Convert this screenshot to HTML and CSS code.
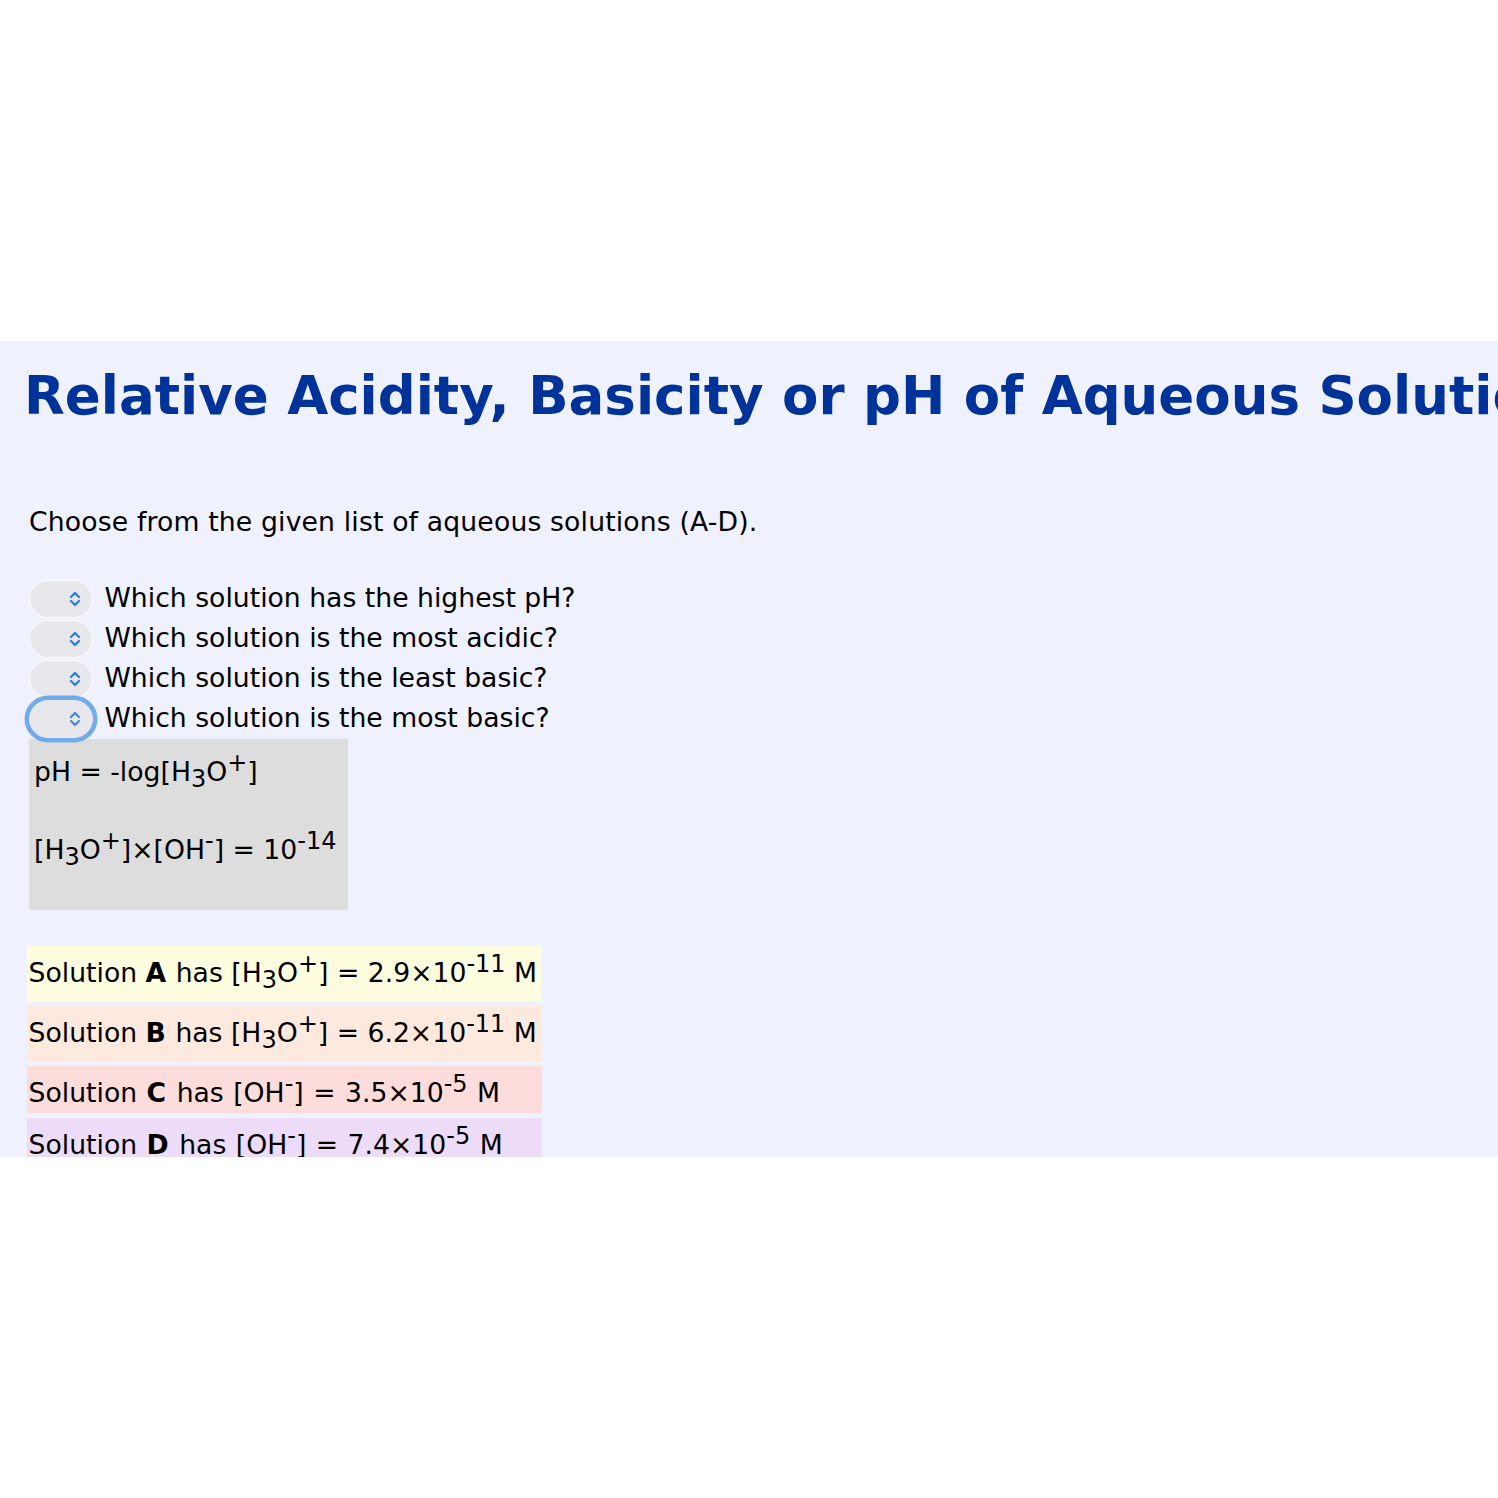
FILE: index.html
```html
<!DOCTYPE html>
<html lang="en">
<head>
<meta charset="utf-8">
<title>Relative Acidity, Basicity or pH of Aqueous Solutions</title>
<link rel="stylesheet" href="styles.css">
</head>
<body>
<div class="top-space"></div>
<main class="frame">
  <h1 class="title">Relative Acidity, Basicity or pH of Aqueous Solutions</h1>
  <p class="intro">Choose from the given list of aqueous solutions (A-D).</p>
  <div class="questions">
    <div class="q">
      <span class="sel"><svg class="chev" viewBox="0 0 12 18" width="12" height="18"><path d="M2 7 L6 3 L10 7 M2 11 L6 15 L10 11" fill="none" stroke="#2b7be3" stroke-width="2.2" stroke-linecap="round" stroke-linejoin="round"/></svg></span>
      <span class="qtext">Which solution has the highest pH?</span>
    </div>
    <div class="q">
      <span class="sel"><svg class="chev" viewBox="0 0 12 18" width="12" height="18"><path d="M2 7 L6 3 L10 7 M2 11 L6 15 L10 11" fill="none" stroke="#2b7be3" stroke-width="2.2" stroke-linecap="round" stroke-linejoin="round"/></svg></span>
      <span class="qtext">Which solution is the most acidic?</span>
    </div>
    <div class="q">
      <span class="sel"><svg class="chev" viewBox="0 0 12 18" width="12" height="18"><path d="M2 7 L6 3 L10 7 M2 11 L6 15 L10 11" fill="none" stroke="#2b7be3" stroke-width="2.2" stroke-linecap="round" stroke-linejoin="round"/></svg></span>
      <span class="qtext">Which solution is the least basic?</span>
    </div>
    <div class="q">
      <span class="sel focused"><svg class="chev" viewBox="0 0 12 18" width="12" height="18"><path d="M2 7 L6 3 L10 7 M2 11 L6 15 L10 11" fill="none" stroke="#4a86d6" stroke-width="2.2" stroke-linecap="round" stroke-linejoin="round"/></svg></span>
      <span class="qtext">Which solution is the most basic?</span>
    </div>
  </div>
  <div class="formula">
    <div class="fline">pH = -log[H<sub>3</sub>O<sup>+</sup>]</div>
    <div class="fline second">[H<sub>3</sub>O<sup>+</sup>]×[OH<sup>-</sup>] = 10<sup>-14</sup></div>
  </div>
  <div class="solutions">
    <div class="sol sol-a">Solution <b>A</b> has [H<sub>3</sub>O<sup>+</sup>] = 2.9×10<sup>-11</sup> M</div>
    <div class="sol sol-b">Solution <b>B</b> has [H<sub>3</sub>O<sup>+</sup>] = 6.2×10<sup>-11</sup> M</div>
    <div class="sol sol-c short">Solution <b>C</b> has [OH<sup>-</sup>] = 3.5×10<sup>-5</sup> M</div>
    <div class="sol sol-d short">Solution <b>D</b> has [OH<sup>-</sup>] = 7.4×10<sup>-5</sup> M</div>
  </div>
</main>
</body>
</html>
```

FILE: styles.css
```css
html, body {
  margin: 0;
  padding: 0;
  background: #ffffff;
}

body {
  font-family: "DejaVu Sans", Verdana, sans-serif;
  font-size: 26.67px;
  color: #000000;
}

.top-space {
  height: 341px;
}

.frame {
  display: block;
  height: 816px;
  overflow: hidden;
  background: #eff1fd;
}

.title {
  margin: 24px 0 0 24px;
  font-size: 53px;
  font-weight: bold;
  line-height: normal;
  color: #003399;
  white-space: nowrap;
}

.intro {
  margin: 80px 0 0 29px;
  line-height: 31px;
  letter-spacing: 0.15px;
}

.questions {
  margin: 42px 0 0 29px;
  display: flex;
  flex-direction: column;
}

.q {
  height: 40px;
  display: flex;
  align-items: center;
}

.sel {
  box-sizing: border-box;
  width: 64px;
  height: 38px;
  border: 1.5px solid #ffffff;
  border-radius: 19px;
  background: #e7e7ec;
  display: flex;
  align-items: center;
  justify-content: flex-end;
  padding-right: 11px;
  flex: none;
}

.sel.focused {
  box-shadow: 0 0 0 4.5px #72aaea;
  border-color: #e7e7ec;
}

.chev {
  display: block;
}

.qtext {
  margin: 0 0 4px 11.5px;
  line-height: 31px;
  white-space: nowrap;
}

sub, sup {
  font-size: 0.9em;
  line-height: 0;
}

.formula {
  box-sizing: border-box;
  margin: 0 0 0 29px;
  width: 319px;
  height: 171px;
  padding: 17px 0 0 5px;
  background: #dddddd;
}

.fline {
  line-height: 31px;
  white-space: nowrap;
}

.fline.second {
  margin-top: 47px;
}

.solutions {
  margin: 36px 0 0 27px;
  width: 515px;
  display: flex;
  flex-direction: column;
  gap: 5px;
}

.sol {
  box-sizing: border-box;
  height: 55px;
  padding: 11px 0 0 1.5px;
  line-height: 31px;
  white-space: nowrap;
}

.sol b {
  letter-spacing: 1px;
}

.sol.short {
  height: 47px;
  word-spacing: 1px;
}

.sol-a { background: #fefde0; }
.sol-b { background: #fde9dd; }
.sol-c { background: #fddcdc; }
.sol-d { background: #ecdcf8; }
```
